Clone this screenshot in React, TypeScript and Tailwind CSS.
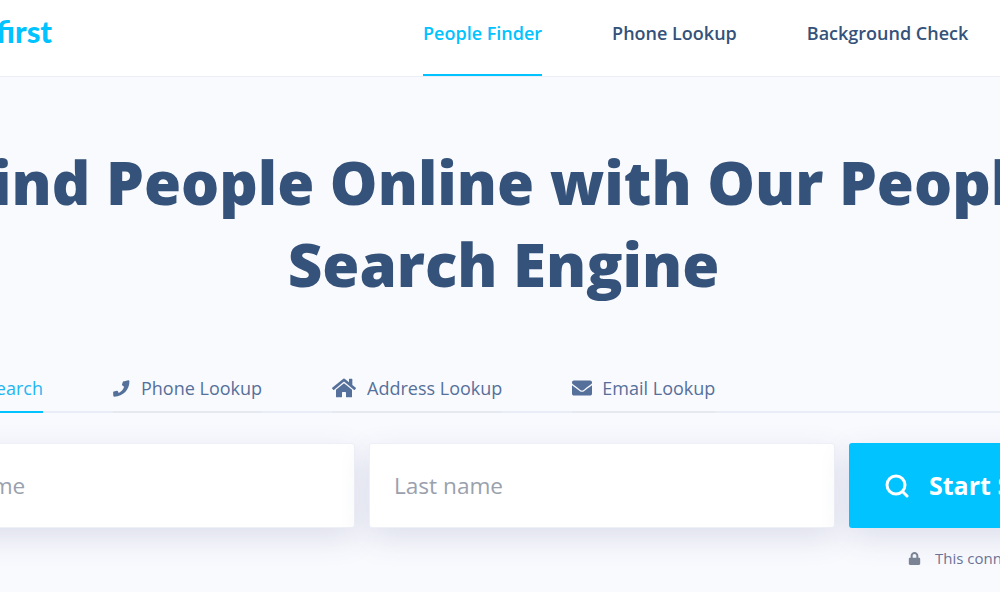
import { FaHome, FaEnvelope, FaLock, FaUser } from "react-icons/fa";

function Tab({ icon, label, active }: { icon?: React.ReactNode; label: string; active?: boolean }) {
  return (
    <div className={`flex items-center h-[48px] border-b-2 mb-[-2px] ${active ? "border-[#00c3ff] text-[#1fb6f0]" : "border-[#e6e9f0] text-[#55709a]"}`}>
      {icon}
      <span>{label}</span>
    </div>
  );
}

function PhoneIcon() {
  return (
    <svg viewBox="0 0 17 17" className="w-[17px] h-[17px] mr-[11px]" fill="currentColor">
      <path d="M11.6 1.2l3.6-0.9c0.6-0.1 1.1 0.2 1.2 0.8 0.4 8.2-6.3 15.6-15 15.7-0.6 0-1-0.4-1.1-1l-0.2-3.3c0-0.5 0.2-0.9 0.7-1l3-0.8c0.5-0.1 0.9 0.1 1.1 0.5l0.8 1.7c2.6-1.2 4.6-3.5 5.4-6.2l-1.7-1.2c-0.4-0.3-0.5-0.7-0.4-1.1l0.9-2.7c0.1-0.3 0.4-0.5 0.7-0.5z" />
    </svg>
  );
}

export default function App() {
  return (
    <div className="w-[1000px] h-[592px] overflow-hidden bg-[#f9fafe] font-['Open_Sans',sans-serif]">
      <header className="h-[77px] bg-white border-b border-[#ebeef7] flex items-stretch">
        <div className="w-[423px] shrink-0 flex items-center h-[63px] font-['Lato',sans-serif] text-[31px] font-black text-[#00c3ff] overflow-hidden">
          <span className="-ml-[4px]">first</span>
        </div>
        <nav className="flex gap-[70px] text-[18px] font-semibold text-[#34527a] whitespace-nowrap">
          <a className="h-[76px] pt-[20px] border-b-2 border-[#00c3ff] text-[#00c3ff]">People Finder</a>
          <a className="h-[76px] pt-[20px]">Phone Lookup</a>
          <a className="h-[76px] pt-[20px]">Background Check</a>
        </nav>
      </header>

      <main className="w-[1229px] -ml-[111px]">
        <h1 className="mt-[64px] -mx-[100px] text-center text-[60px] leading-[82px] font-extrabold text-[#34527a] whitespace-nowrap">
          Find People Online with Our People
          <br />
          Search Engine
        </h1>

        <div className="mt-[60px] flex gap-[70px] border-b-2 border-[#e9edf5] text-[18px] whitespace-nowrap">
          <Tab active icon={<FaUser className="w-[18px] h-[18px] mr-[24px]" />} label="Name Search" />
          <Tab icon={<PhoneIcon />} label="Phone Lookup" />
          <Tab icon={<FaHome className="w-[24px] h-[24px] mr-[11px]" />} label="Address Lookup" />
          <Tab icon={<FaEnvelope className="w-[20px] h-[20px] mr-[10px]" />} label="Email Lookup" />
        </div>

        <div className="mt-[30px] flex gap-[14px]">
          <div className="w-[466px] h-[85px] flex items-center pl-[24px] bg-white border border-[#eef0f8] rounded-[3px] shadow-[0_10px_30px_rgba(60,70,130,0.15)] text-[22.6px] text-[#9aa1ad]">First name</div>
          <div className="w-[466px] h-[85px] flex items-center pl-[24px] bg-white border border-[#eef0f8] rounded-[3px] shadow-[0_10px_30px_rgba(60,70,130,0.15)] text-[22.6px] text-[#9aa1ad]">Last name</div>
          <div className="flex-1 h-[85px] flex items-center pl-[36px] bg-[#00c3ff] rounded-[3px] shadow-[0_10px_30px_rgba(60,70,130,0.15)] text-white text-[25px] font-bold whitespace-nowrap">
            <svg viewBox="0 0 24 24" fill="none" stroke="white" strokeWidth="3" strokeLinecap="round" className="w-[24px] h-[24px] mr-[20px]">
              <circle cx="11" cy="11" r="9" />
              <path d="M18 18l4 4" />
            </svg>
            Start Search
          </div>
        </div>

        <div className="mt-[19px] ml-[1019px] flex items-center text-[15px] text-[#6b7394] whitespace-nowrap">
          <FaLock className="w-[13px] h-[13px] mr-[14px] text-[#7a8494]" />
          This connection is secure
        </div>
      </main>
    </div>
  );
}
